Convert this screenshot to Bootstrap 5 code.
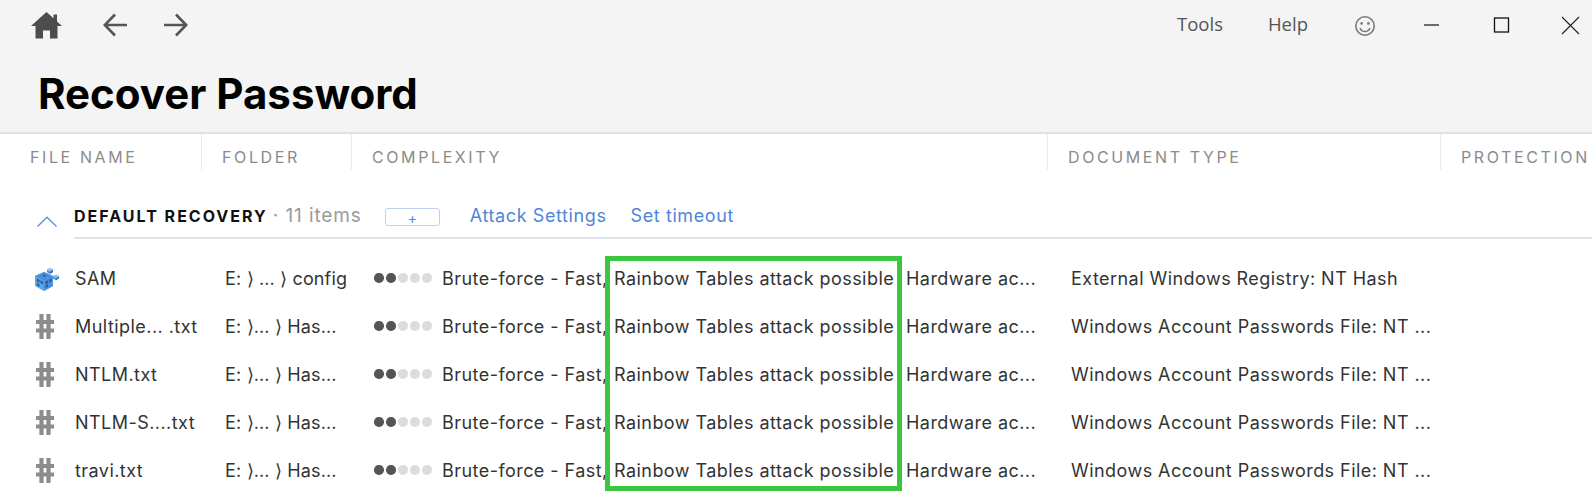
<!DOCTYPE html>
<html lang="en">
<head>
<meta charset="utf-8">
<title>Recover Password</title>
<link rel="stylesheet" href="https://cdn.jsdelivr.net/npm/bootstrap@5.3.0/dist/css/bootstrap.min.css">
<style>
html,body{height:491px;overflow:hidden}
body{font-family:Inter,"Liberation Sans",sans-serif;background:#fff;color:#333;position:relative}
.app-top{height:134px;background:#f4f4f4;border-bottom:2px solid #e2e2e2}
.tool-row{height:50px;padding-left:31px}
.tool-btn{background:none;border:0;padding:0;display:flex;line-height:0}
.menu-word{font-family:"Open Sans",sans-serif;font-size:18.5px;color:#555;line-height:48px;height:50px}
.app-title{font-size:42px;font-weight:700;color:#000;line-height:48px;margin:20px 0 0 38px;letter-spacing:0}
.head-row{height:36px;font-size:16px;letter-spacing:2.6px;color:#8b8b8b;white-space:nowrap;overflow:hidden}
.head-cell{padding-left:20px;line-height:47px;border-right:1px solid #ececec}
.head-cell:first-child{padding-left:30px}
.head-cell:last-child{border-right:0}
.w-a{flex:0 0 202px}.w-b{flex:0 0 150px}.w-c{flex:0 0 696px}.w-d{flex:0 0 393px}.w-e{flex:1 0 0}
.group-row{height:84px;padding-left:37px}
.group-main{height:34px;margin-top:35px;margin-left:17px;border-bottom:2px solid #dfe3e8;flex:1}
.group-name{font-size:16px;font-weight:700;letter-spacing:2px;color:#111;line-height:22px}
.group-count{font-size:19px;color:#9a9a9a;margin-left:5px;letter-spacing:.9px;line-height:22px}
.plus-btn{width:55px;height:18px;border:1px solid #bdd0ee;border-radius:3px;background:#fff;color:#4f86d8;font-size:14px;line-height:15px;padding:0;margin:3px 30px 0 23px;text-align:center}
.group-link{color:#4f86d8;font-size:18px;letter-spacing:.6px;text-decoration:none;margin-right:24px;line-height:22px}
.file-row{height:48px;font-size:18px;letter-spacing:.45px;white-space:nowrap;font-weight:400;color:#333}
.ic{flex:0 0 75px;padding-left:35px;line-height:0}
.fname{flex:0 0 150px;overflow:hidden}
.fold{flex:0 0 149px;overflow:hidden;letter-spacing:.15px}
.dots{flex:0 0 68px;gap:2.5px}
.dot-on,.dot-off{width:9.5px;height:9.5px;border-radius:50%;display:block}
.dot-on{background:#555}.dot-off{background:#dcdcdc}
.att{flex:0 0 172px;overflow:hidden}
.rain{flex:0 0 292px;overflow:hidden}
.hard{flex:0 0 165px;overflow:hidden}
.green-mark{position:absolute;left:605px;top:256px;width:297px;height:235px;border:5px solid #3cc63f;pointer-events:none}
</style>
</head>
<body>
<div class="app-top">
  <div class="tool-row d-flex align-items-center">
    <button class="tool-btn" aria-label="Home"><svg width="31" height="27" viewBox="0 0 31 27"><path d="M15.500 0 0 14h4.500v12.500h7.500v-8h7v8h7.500V14H31L26 9.500V2.500h-3.500v3.800z" fill="#4d4d4d"/></svg></button>
    <button class="tool-btn" style="margin-left:41px" aria-label="Back"><svg width="25" height="24" viewBox="0 0 25 24"><path d="M24 12H2M12 1.500 1.800 12 12 22.500" fill="none" stroke="#555" stroke-width="2.600"/></svg></button>
    <button class="tool-btn" style="margin-left:35px" aria-label="Forward"><svg width="25" height="24" viewBox="0 0 25 24"><path d="M1 12h22M13 1.500 23.200 12 13 22.500" fill="none" stroke="#555" stroke-width="2.600"/></svg></button>
    <div class="d-flex align-items-center ms-auto">
      <span class="menu-word">Tools</span>
      <span class="menu-word" style="margin-left:45px">Help</span>
      <svg style="margin-left:46px;margin-top:2px" width="22" height="22" viewBox="0 0 22 22"><circle cx="11" cy="11" r="9.200" fill="none" stroke="#777" stroke-width="1.600"/><circle cx="7.600" cy="8.400" r="1.300" fill="#777"/><circle cx="14.400" cy="8.400" r="1.300" fill="#777"/><path d="M6 13c1 2.600 3 3.600 5 3.600s4-1 5-3.600" fill="none" stroke="#777" stroke-width="1.500"/></svg>
      <svg style="margin-left:48px" width="16" height="16" viewBox="0 0 16 16"><path d="M0 8h15" stroke="#111" stroke-width="1.200"/></svg>
      <svg style="margin-left:53px" width="17" height="17" viewBox="0 0 17 17"><rect x="1.500" y="1" width="14" height="14" fill="none" stroke="#111" stroke-width="1.300"/></svg>
      <svg style="margin-left:51px;margin-right:12px" width="19" height="19" viewBox="0 0 19 19"><path d="M1 1l17 17M18 1 1 18" stroke="#222" stroke-width="1.100"/></svg>
    </div>
  </div>
  <h1 class="app-title">Recover Password</h1>
</div>
<div class="head-row d-flex">
  <div class="head-cell w-a">FILE NAME</div>
  <div class="head-cell w-b">FOLDER</div>
  <div class="head-cell w-c">COMPLEXITY</div>
  <div class="head-cell w-d">DOCUMENT TYPE</div>
  <div class="head-cell w-e">PROTECTION</div>
</div>
<div class="group-row d-flex">
  <svg class="mt-auto" style="margin-bottom:27px;flex:none" width="20" height="11" viewBox="0 0 20 11"><path d="M.5 10.500 10 1.200l9.500 9.300" fill="none" stroke="#5b8fe0" stroke-width="1.300"/></svg>
  <div class="group-main d-flex align-items-start">
    <span class="group-name">DEFAULT RECOVERY</span><span class="group-count">· 11 items</span>
    <button class="plus-btn">+</button>
    <a class="group-link" href="#">Attack Settings</a>
    <a class="group-link" href="#">Set timeout</a>
  </div>
</div>
<div class="file-list">
  <div class="file-row d-flex align-items-center">
    <span class="ic"><svg width="24" height="25" viewBox="0 0 24 25"><path d="M0 10l9-4 9 4v10l-9 5-9-5z" fill="#5aa5ea"/><path d="M9 14.500 18 10v10l-9 5z" fill="#4a90dc"/><path d="M0 10l9-4 9 4-9 4.500z" fill="#4a8fd8"/><path d="M2 12.500l2.500 1.200v3L2 15.500zM5.500 14.200 8 15.400v3l-2.500-1.200zM2 17l2.500 1.200v2.500L2 19.500zM10.500 15.400 13 14.200v3l-2.500 1.200zM14 13.700l2.500-1.200v3L14 16.700zM10.500 19.500 13 18.300v2.500l-2.500 1.200zM7 9.500l2-1 2.500 1-2 1.200z" fill="#2a5d9c"/><path d="M12 3.500 15 1.700l3 1.800-3 2z" fill="#8cc4f5"/><path d="M12 3.500v2.700l3 1.800V5.500z" fill="#4d8fd8"/><path d="M18 3.500v2.700L15 8V5.500z" fill="#3572b8"/><path d="M18 10l3-1.800 3 1.800-3 2z" fill="#8cc4f5"/><path d="M18 10v2.500l3 1.800V12z" fill="#4d8fd8"/><path d="M24 10v2.500l-3 1.800V12z" fill="#3572b8"/></svg></span>
    <span class="fname">SAM</span><span class="fold">E: ⟩ ... ⟩ config</span>
    <span class="dots d-flex"><i class="dot-on"></i><i class="dot-on"></i><i class="dot-off"></i><i class="dot-off"></i><i class="dot-off"></i></span>
    <span class="att">Brute-force - Fast,</span><span class="rain">Rainbow Tables attack possible</span><span class="hard">Hardware ac...</span><span>External Windows Registry: NT Hash</span>
  </div>
  <div class="file-row d-flex align-items-center">
    <span class="ic"><svg width="20" height="25" viewBox="0 0 20 25"><path d="M6.500 0v25M13.500 0v25M1 8h18M1 16.500h18" fill="none" stroke="#8c8c8c" stroke-width="4.200"/></svg></span>
    <span class="fname">Multiple... .txt</span><span class="fold">E: ⟩... ⟩ Has...</span>
    <span class="dots d-flex"><i class="dot-on"></i><i class="dot-on"></i><i class="dot-off"></i><i class="dot-off"></i><i class="dot-off"></i></span>
    <span class="att">Brute-force - Fast,</span><span class="rain">Rainbow Tables attack possible</span><span class="hard">Hardware ac...</span><span>Windows Account Passwords File: NT ...</span>
  </div>
  <div class="file-row d-flex align-items-center">
    <span class="ic"><svg width="20" height="25" viewBox="0 0 20 25"><path d="M6.500 0v25M13.500 0v25M1 8h18M1 16.500h18" fill="none" stroke="#8c8c8c" stroke-width="4.200"/></svg></span>
    <span class="fname">NTLM.txt</span><span class="fold">E: ⟩... ⟩ Has...</span>
    <span class="dots d-flex"><i class="dot-on"></i><i class="dot-on"></i><i class="dot-off"></i><i class="dot-off"></i><i class="dot-off"></i></span>
    <span class="att">Brute-force - Fast,</span><span class="rain">Rainbow Tables attack possible</span><span class="hard">Hardware ac...</span><span>Windows Account Passwords File: NT ...</span>
  </div>
  <div class="file-row d-flex align-items-center">
    <span class="ic"><svg width="20" height="25" viewBox="0 0 20 25"><path d="M6.500 0v25M13.500 0v25M1 8h18M1 16.500h18" fill="none" stroke="#8c8c8c" stroke-width="4.200"/></svg></span>
    <span class="fname">NTLM-S....txt</span><span class="fold">E: ⟩... ⟩ Has...</span>
    <span class="dots d-flex"><i class="dot-on"></i><i class="dot-on"></i><i class="dot-off"></i><i class="dot-off"></i><i class="dot-off"></i></span>
    <span class="att">Brute-force - Fast,</span><span class="rain">Rainbow Tables attack possible</span><span class="hard">Hardware ac...</span><span>Windows Account Passwords File: NT ...</span>
  </div>
  <div class="file-row d-flex align-items-center">
    <span class="ic"><svg width="20" height="25" viewBox="0 0 20 25"><path d="M6.500 0v25M13.500 0v25M1 8h18M1 16.500h18" fill="none" stroke="#8c8c8c" stroke-width="4.200"/></svg></span>
    <span class="fname">travi.txt</span><span class="fold">E: ⟩... ⟩ Has...</span>
    <span class="dots d-flex"><i class="dot-on"></i><i class="dot-on"></i><i class="dot-off"></i><i class="dot-off"></i><i class="dot-off"></i></span>
    <span class="att">Brute-force - Fast,</span><span class="rain">Rainbow Tables attack possible</span><span class="hard">Hardware ac...</span><span>Windows Account Passwords File: NT ...</span>
  </div>
</div>
<div class="green-mark"></div>
</body>
</html>
